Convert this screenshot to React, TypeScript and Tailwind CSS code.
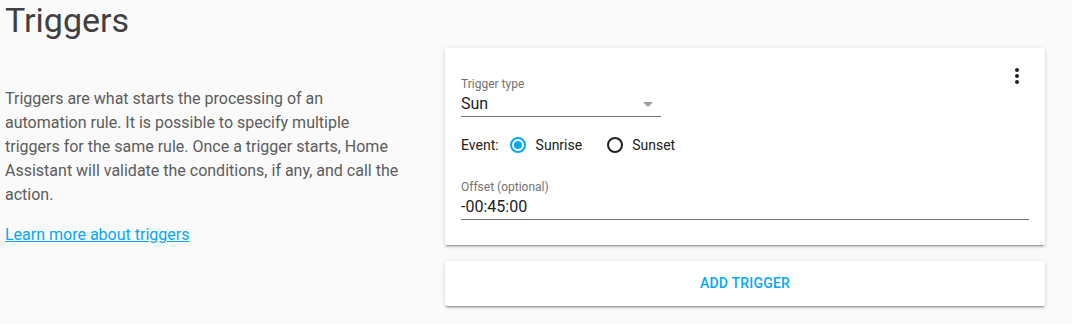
import React from "react";

export default function App() {
  return (
    <div className="w-[1072px] h-[324px] overflow-hidden bg-[#fafafa] pl-[5px] font-['Roboto',sans-serif]">
      <h1 className="text-[34px] leading-[40px] font-normal text-[#404040]">Triggers</h1>
      <div className="flex">
        <div className="w-[400px] mt-[47px] mr-[40px]">
          <p className="text-[16px] leading-[24px] text-[#5c5c5c]">
            Triggers are what starts the processing of an automation rule. It is possible to specify multiple triggers for the same rule. Once a trigger starts, Home Assistant will validate the conditions, if any, and call the action.
          </p>
          <a href="#" className="block mt-[16px] text-[16px] leading-[24px] text-[#03a9f4] underline w-fit">
            Learn more about triggers
          </a>
        </div>
        <div className="w-[600px] mt-[8px]">
          <div className="relative bg-white rounded-[2px] shadow-[0_2px_2px_0_rgba(0,0,0,0.14),0_1px_5px_0_rgba(0,0,0,0.12),0_3px_1px_-2px_rgba(0,0,0,0.2)] px-[16px] pt-[28px] pb-[25px]">
            <svg className="absolute right-[16px] top-[16px]" width="24" height="24" viewBox="0 0 24 24">
              <path fill="#212121" d="M12,16A2,2 0 0,1 14,18A2,2 0 0,1 12,20A2,2 0 0,1 10,18A2,2 0 0,1 12,16M12,10A2,2 0 0,1 14,12A2,2 0 0,1 12,14A2,2 0 0,1 10,12A2,2 0 0,1 12,10M12,4A2,2 0 0,1 14,6A2,2 0 0,1 12,8A2,2 0 0,1 10,6A2,2 0 0,1 12,4Z" />
            </svg>
            <div className="w-[200px]">
              <div className="text-[12px] leading-[16px] text-[#737373]">Trigger type</div>
              <div className="flex items-center justify-between h-[25px] border-b border-[#737373] text-[16px] leading-[24px] text-[#212121]">
                <span className="h-[24px]">Sun</span>
                <span className="mr-[8px] w-0 h-0 border-l-[5px] border-r-[5px] border-t-[5px] border-l-transparent border-r-transparent border-t-[#9e9e9e]" />
              </div>
            </div>
            <div className="flex items-center mt-[18px] h-[20px] text-[14px] leading-[20px] text-[#212121]">
              <span>Event:</span>
              <span className="ml-[11px] flex items-center justify-center w-[16px] h-[16px] rounded-full border-2 border-[#03a9f4]">
                <span className="w-[8px] h-[8px] rounded-full bg-[#03a9f4]" />
              </span>
              <span className="ml-[10px]">Sunrise</span>
              <span className="ml-[25px] w-[16px] h-[16px] rounded-full border-2 border-[#212121]" />
              <span className="ml-[9px]">Sunset</span>
            </div>
            <div className="mt-[24px]">
              <div className="text-[12px] leading-[16px] text-[#737373]">Offset (optional)</div>
              <div className="h-[25px] border-b border-[#737373] text-[16px] leading-[24px] text-[#212121]">-00:45:00</div>
            </div>
          </div>
          <div className="mt-[16px] h-[45px] bg-white rounded-[2px] shadow-[0_2px_2px_0_rgba(0,0,0,0.14),0_1px_5px_0_rgba(0,0,0,0.12),0_3px_1px_-2px_rgba(0,0,0,0.2)] flex items-center justify-center">
            <span className="text-[14px] font-medium tracking-[0.2px] text-[#03a9f4] uppercase">Add trigger</span>
          </div>
        </div>
      </div>
    </div>
  );
}
